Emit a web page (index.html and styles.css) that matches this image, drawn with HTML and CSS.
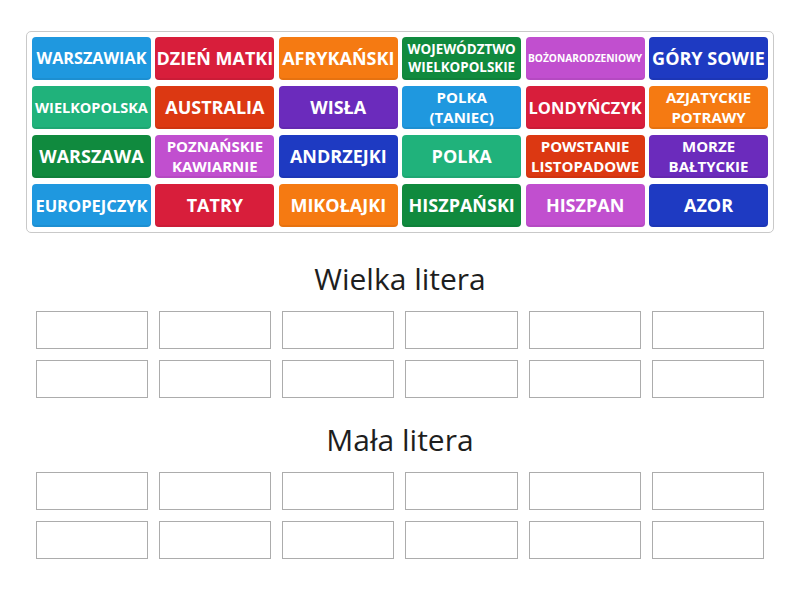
FILE: index.html
```html
<!DOCTYPE html>
<html lang="pl">
<head>
  <meta charset="utf-8">
  <title>Wielka czy mała litera?</title>
  <link rel="stylesheet" href="styles.css">
</head>
<body>
  <div class="board">
    <div class="tile blue fs-16">Warszawiak</div>
    <div class="tile red">Dzień Matki</div>
    <div class="tile orange">Afrykański</div>
    <div class="tile green two-line fs-13">Województwo wielkopolskie</div>
    <div class="tile magenta fs-10">Bożonarodzeniowy</div>
    <div class="tile navy">Góry Sowie</div>

    <div class="tile teal fs-14">Wielkopolska</div>
    <div class="tile rust">Australia</div>
    <div class="tile purple">Wisła</div>
    <div class="tile blue two-line">Polka (taniec)</div>
    <div class="tile red fs-17">Londyńczyk</div>
    <div class="tile orange two-line">Azjatyckie potrawy</div>

    <div class="tile green">Warszawa</div>
    <div class="tile magenta two-line">Poznańskie kawiarnie</div>
    <div class="tile navy">Andrzejki</div>
    <div class="tile teal">Polka</div>
    <div class="tile rust two-line">Powstanie listopadowe</div>
    <div class="tile purple two-line">Morze Bałtyckie</div>

    <div class="tile blue fs-17">Europejczyk</div>
    <div class="tile red">Tatry</div>
    <div class="tile orange">Mikołajki</div>
    <div class="tile green">Hiszpański</div>
    <div class="tile magenta">Hiszpan</div>
    <div class="tile navy">Azor</div>
  </div>

  <div class="group">
    <h2>Wielka litera</h2>
    <div class="slots">
      <div class="slot"></div><div class="slot"></div><div class="slot"></div>
      <div class="slot"></div><div class="slot"></div><div class="slot"></div>
      <div class="slot"></div><div class="slot"></div><div class="slot"></div>
      <div class="slot"></div><div class="slot"></div><div class="slot"></div>
    </div>
  </div>

  <div class="group">
    <h2>Mała litera</h2>
    <div class="slots">
      <div class="slot"></div><div class="slot"></div><div class="slot"></div>
      <div class="slot"></div><div class="slot"></div><div class="slot"></div>
      <div class="slot"></div><div class="slot"></div><div class="slot"></div>
      <div class="slot"></div><div class="slot"></div><div class="slot"></div>
    </div>
  </div>
</body>
</html>
```

FILE: styles.css
```css
body {
  margin: 0;
  font-family: 'Open Sans', 'Noto Sans', sans-serif;
  background: #fff;
  color: #222;
}

/* pool of cards to sort */
.board {
  margin: 31px 26px 0;
  padding: 5px;
  border: 1px solid #c9c9c9;
  border-radius: 5px;
  display: grid;
  grid-template-columns: repeat(6, minmax(0, 1fr));
  grid-auto-rows: 43px;
  column-gap: 4.5px;
  row-gap: 6px;
}
.tile {
  display: flex; align-items: center; justify-content: center;
  padding: 0 2px;
  border-radius: 4px;
  color: #fff;
  font-weight: 700;
  font-size: 18px;
  line-height: 1.2;
  text-transform: uppercase;
  text-align: center;
  white-space: nowrap;
  box-shadow: inset 0 -2px 0 rgba(0,0,0,0.06);
}
.tile.two-line { white-space: normal; font-size: 15px; line-height: 1.33; padding: 0 5px; }
.tile.fs-17 { font-size: 16.5px; }
.tile.fs-16 { font-size: 16.2px; }
.tile.fs-14 { font-size: 14.5px; }
.tile.fs-13 { font-size: 13.4px; }
.tile.fs-10 { font-size: 10.2px; }

.blue { background: #1f98df; }
.red { background: #d81e3b; }
.orange { background: #f57a12; }
.green { background: #108a3e; }
.magenta { background: #c14fcf; }
.navy { background: #1e3ac2; }
.teal { background: #20b27b; }
.rust { background: #dc3812; }
.purple { background: #6b2bbc; }

/* drop zones */
.group { margin-top: 26px; }
.group + .group { margin-top: 22px; }
.group h2 {
  margin: 0 0 12px;
  font-size: 30px;
  font-weight: 400;
  line-height: 40px;
  text-align: center;
  color: #1e1e1e;
}
.slots {
  margin: 0 36px;
  display: grid;
  grid-template-columns: repeat(6, minmax(0, 1fr));
  grid-auto-rows: 38px;
  gap: 11px;
}
.slot { border: 1px solid #acacac; }
```
